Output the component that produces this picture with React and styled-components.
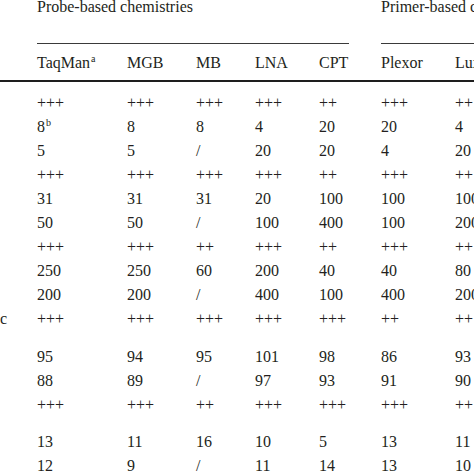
import React from "react";
import styled, { createGlobalStyle } from "styled-components";

const GlobalStyle = createGlobalStyle`
  html, body {
    margin: 0;
    padding: 0;
    background: #fff;
  }
  body {
    overflow: hidden;
  }
`;

const COLUMNS = "37px 90px 69px 59px 64px 62px 74px 80px";

const Page = styled.div`
  width: 474px;
  height: 474px;
  overflow: hidden;
  background: #fff;
  color: #231f20;
  font-family: "Liberation Serif", "Times New Roman", serif;
  font-size: 16px;
  white-space: nowrap;
`;

const Table = styled.div`
  width: 535px;
`;

const GroupRow = styled.div`
  display: grid;
  grid-template-columns: ${COLUMNS};
  line-height: 13px;
`;

const GroupTitle = styled.div`
  grid-column: ${props => props.$span};
  margin-right: ${props => props.$gap || 0}px;
  padding-bottom: 30px;
  border-bottom: 1px solid #3a3a3a;
`;

const HeadRow = styled.div`
  display: grid;
  grid-template-columns: ${COLUMNS};
  height: 24px;
  line-height: 24px;
  padding: 7px 0 5px;
  border-bottom: 2px solid #1e1e1e;
`;

const Body = styled.div`
  padding-top: 9px;
`;

const Row = styled.div`
  display: grid;
  grid-template-columns: ${COLUMNS};
  height: 24px;
  line-height: 24px;
  margin-top: ${props => props.$gap || 0}px;
`;

const Cell = styled.div`
  overflow: visible;
`;

const Label = styled.div`
  overflow: hidden;
`;

const Sup = styled.sup`
  font-size: 10px;
  line-height: 0;
  vertical-align: 6px;
  margin-left: 1px;
`;

const headers = [
  ["TaqMan", "a"],
  ["MGB"],
  ["MB"],
  ["LNA"],
  ["CPT"],
  ["Plexor"],
  ["Lux"]
];

const rows = [
  { cells: ["+++", "+++", "+++", "+++", "++", "+++", "++"] },
  { cells: [["8", "b"], "8", "8", "4", "20", "20", "4"] },
  { cells: ["5", "5", "/", "20", "20", "4", "20"] },
  { cells: ["+++", "+++", "+++", "+++", "++", "+++", "++"] },
  { cells: ["31", "31", "31", "20", "100", "100", "100"] },
  { cells: ["50", "50", "/", "100", "400", "100", "200"] },
  { cells: ["+++", "+++", "++", "+++", "++", "+++", "++"] },
  { cells: ["250", "250", "60", "200", "40", "40", "80"] },
  { cells: ["200", "200", "/", "400", "100", "400", "200"] },
  { label: "c", cells: ["+++", "+++", "+++", "+++", "+++", "++", "++"] },
  { gap: 14, cells: ["95", "94", "95", "101", "98", "86", "93"] },
  { cells: ["88", "89", "/", "97", "93", "91", "90"] },
  { cells: ["+++", "+++", "++", "+++", "+++", "+++", "++"] },
  { gap: 13, cells: ["13", "11", "16", "10", "5", "13", "11"] },
  { cells: ["12", "9", "/", "11", "14", "13", "10"] }
];

const renderValue = value =>
  Array.isArray(value) ? (
    <>
      {value[0]}
      <Sup>{value[1]}</Sup>
    </>
  ) : (
    value
  );

const App = () => (
  <Page>
    <GlobalStyle />
    <Table>
      <GroupRow>
        <div />
        <GroupTitle $span="2 / 7" $gap={32}>
          Probe-based chemistries
        </GroupTitle>
        <GroupTitle $span="7 / 9">Primer-based chemistries</GroupTitle>
      </GroupRow>
      <HeadRow>
        <div />
        {headers.map(([name, sup]) => (
          <Cell key={name}>
            {name}
            {sup && <Sup>{sup}</Sup>}
          </Cell>
        ))}
      </HeadRow>
      <Body>
        {rows.map((row, i) => (
          <Row key={i} $gap={row.gap}>
            <Label>{row.label}</Label>
            {row.cells.map((value, j) => (
              <Cell key={j}>{renderValue(value)}</Cell>
            ))}
          </Row>
        ))}
      </Body>
    </Table>
  </Page>
);

export default App;
